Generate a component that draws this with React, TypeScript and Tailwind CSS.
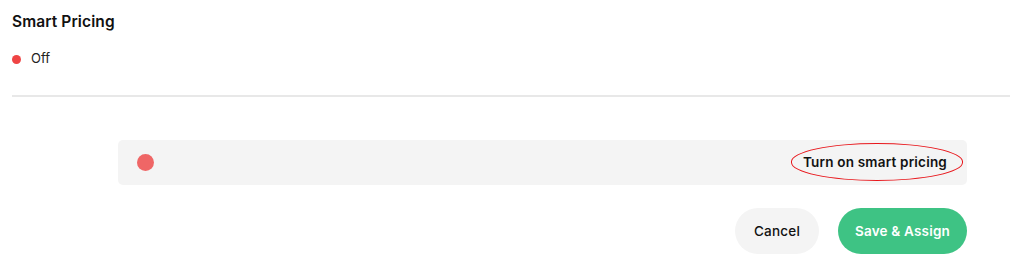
export default function App() {
  return (
    <div className="w-[1010px] h-[267px] bg-white text-[#111] overflow-hidden" style={{ fontFamily: 'Inter, "Open Sans", sans-serif' }}>
      <div className="pl-3 pt-[13px]">
        <div className="text-[15.5px] font-semibold leading-[18px] tracking-[0.1px]">Smart Pricing</div>
        <div className="mt-[19px] flex items-center h-[18px]">
          <span className="w-[9px] h-[9px] rounded-full bg-[#ef4444]" />
          <span className="ml-[10px] text-[13px] text-[#222]">Off</span>
        </div>
        <div className="mt-[27px] h-[2px] bg-[#e8e8e8]" />
      </div>
      <div className="ml-[118px] mr-[43px] mt-[43px]">
        <div className="h-[45px] bg-[#f4f4f4] rounded-[5px] flex items-center justify-between pl-[19px] pr-[20px]">
          <span className="w-[17px] h-[17px] rounded-full bg-[#ef6666]" />
          <span className="relative text-[13.5px] font-semibold tracking-[0.2px]">
            Turn on smart pricing
            <span className="absolute left-[-12px] right-[-16px] top-[-9px] bottom-[-8px] border-[1.5px] border-[#e8161b] rounded-[50%]" />
          </span>
        </div>
        <div className="mt-[23px] flex justify-end gap-[19px]">
          <button className="w-[84px] h-[46px] rounded-full bg-[#f4f4f4] text-[13.5px] font-medium text-[#111] tracking-[0.2px]">Cancel</button>
          <button className="w-[129px] h-[46px] rounded-full bg-[#3ec384] text-[13.5px] font-semibold text-white tracking-[0.2px]">Save &amp; Assign</button>
        </div>
      </div>
    </div>
  );
}
